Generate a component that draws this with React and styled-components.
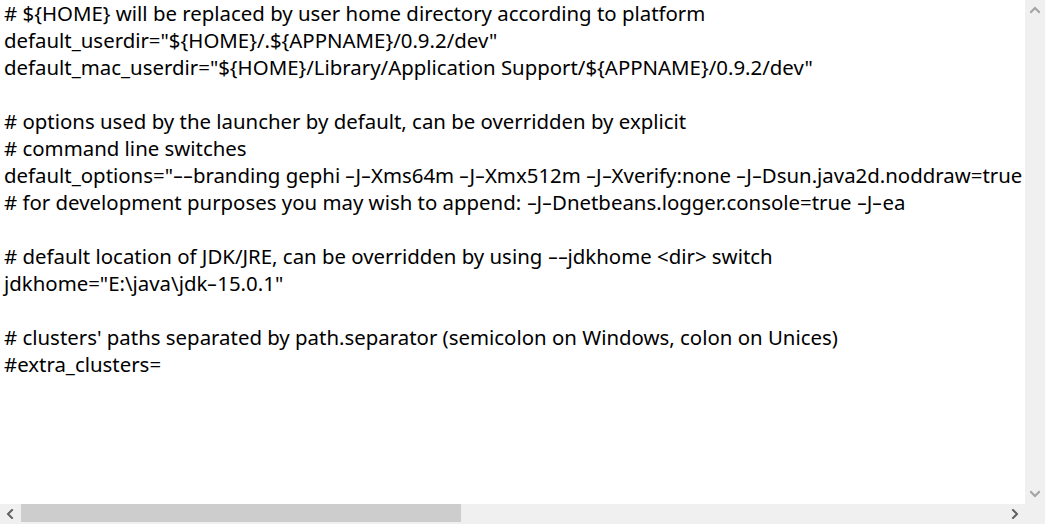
import React from "react";
import styled, { createGlobalStyle } from "styled-components";

const Global = createGlobalStyle`
  html, body { margin: 0; padding: 0; height: 100%; background: #fff; }
  #root { height: 100%; }
  * { box-sizing: border-box; }
`;

const Window = styled.div`
  width: 1045px;
  height: 524px;
  display: grid;
  grid-template-columns: 1fr 20px;
  grid-template-rows: 1fr 20px;
  overflow: hidden;
  background: #fff;
`;

const Editor = styled.div`
  overflow: hidden;
  background: #fff;
  padding: 0 0 0 4px;
`;

const Text = styled.pre`
  margin: 0;
  font-family: "Noto Sans", "Noto Sans CJK SC", sans-serif;
  font-size: ${(p) => p.$size}px;
  line-height: 27px;
  color: #000;
  white-space: pre;
`;

const Dash = styled.span`
  display: inline-block;
  padding: 0 1.7px;
  transform: scaleX(1.6);
`;

const VBar = styled.div`
  background: #f0f0f0;
  display: flex;
  flex-direction: column;
  justify-content: space-between;
`;

const HBar = styled.div`
  background: #f0f0f0;
  display: flex;
  align-items: stretch;
`;

const Corner = styled.div`
  background: #f0f0f0;
`;

const ArrowBtn = styled.div`
  width: 20px;
  height: 20px;
  flex: none;
  display: flex;
  align-items: center;
  justify-content: center;
`;

const Track = styled.div`
  flex: 1;
  display: flex;
  align-items: stretch;
  padding: 0 0 2px 1px;
`;

const Thumb = styled.div`
  width: 440px;
  background: #cdcdcd;
`;

const Chevron = ({ dir, color }) => {
  const paths = {
    up: "M1 7 L5 3 L9 7",
    down: "M1 3 L5 7 L9 3",
    left: "M7 1 L3 5 L7 9",
    right: "M3 1 L7 5 L3 9",
  };
  return (
    <svg width="10" height="10" viewBox="0 0 10 10">
      <path d={paths[dir]} fill="none" stroke={color} strokeWidth="2" strokeLinecap="square" strokeLinejoin="miter" />
    </svg>
  );
};

const lines = [
  "# ${HOME} will be replaced by user home directory according to platform",
  'default_userdir="${HOME}/.${APPNAME}/0.9.2/dev"',
  'default_mac_userdir="${HOME}/Library/Application Support/${APPNAME}/0.9.2/dev"',
  "",
  "# options used by the launcher by default, can be overridden by explicit",
  "# command line switches",
  'default_options="--branding gephi -J-Xms64m -J-Xmx512m -J-Xverify:none -J-Dsun.java2d.noddraw=true -J-Dsun.awt.noerasebackground=true"',
  "# for development purposes you may wish to append: -J-Dnetbeans.logger.console=true -J-ea",
  "",
  "# default location of JDK/JRE, can be overridden by using --jdkhome <dir> switch",
  'jdkhome="E:\\java\\jdk-15.0.1"',
  "",
  "# clusters' paths separated by path.separator (semicolon on Windows, colon on Unices)",
  "#extra_clusters=",
];

const renderLine = (line, i) => {
  const parts = line.split("-");
  return (
    <React.Fragment key={i}>
      {parts.map((p, j) => (
        <React.Fragment key={j}>
          {j > 0 && <Dash>-</Dash>}
          {p}
        </React.Fragment>
      ))}
      {i < lines.length - 1 ? "\n" : null}
    </React.Fragment>
  );
};

export default function App() {
  return (
    <>
      <Global />
      <Window>
        <Editor>
          <Text $size={20.4}>{lines.map(renderLine)}</Text>
        </Editor>
        <VBar>
          <ArrowBtn><Chevron dir="up" color="#a3a3a3" /></ArrowBtn>
          <ArrowBtn><Chevron dir="down" color="#a3a3a3" /></ArrowBtn>
        </VBar>
        <HBar>
          <ArrowBtn><Chevron dir="left" color="#606060" /></ArrowBtn>
          <Track><Thumb /></Track>
          <ArrowBtn><Chevron dir="right" color="#606060" /></ArrowBtn>
        </HBar>
        <Corner />
      </Window>
    </>
  );
}
